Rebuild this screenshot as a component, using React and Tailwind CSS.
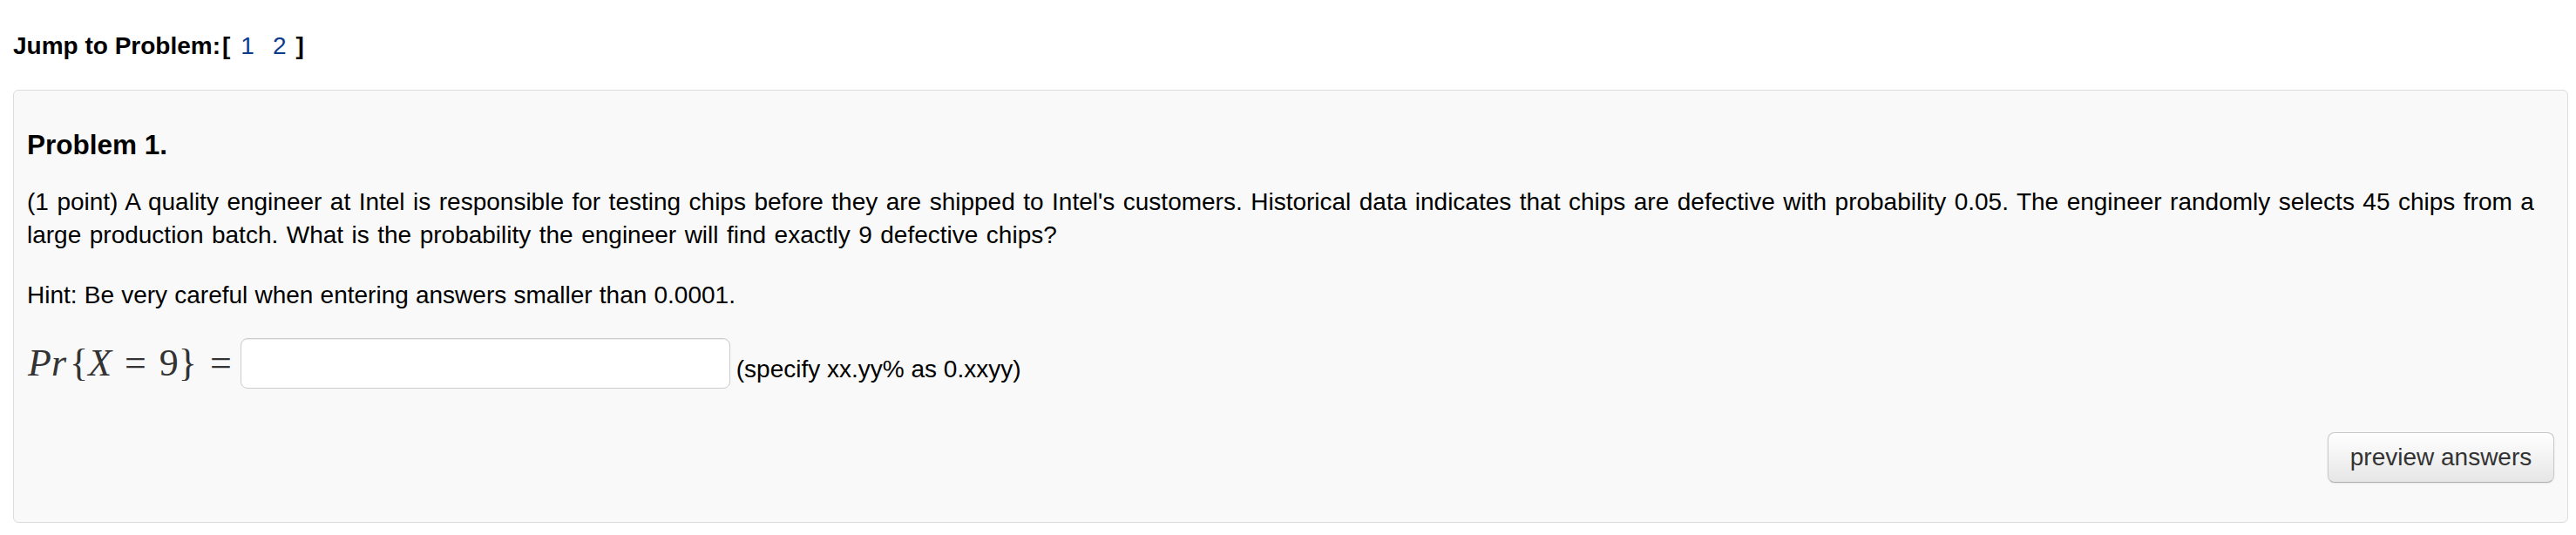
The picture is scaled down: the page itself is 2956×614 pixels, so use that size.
import React from "react";

const App = () => {
  return (
    <div className="min-h-screen bg-white pl-[15px] pr-[9px] font-['Liberation_Sans',Arial,sans-serif] text-black">
      {/* jump bar */}
      <div className="pt-[33px] text-[28px] font-bold leading-[40px] whitespace-nowrap">
        Jump to Problem:
        <span className="ml-[2px]">[</span>
        <a href="#p1" className="ml-[12px] font-normal text-[#0b3b8c]">1</a>
        <a href="#p2" className="ml-[21px] font-normal text-[#0b3b8c]">2</a>
        <span className="ml-[11px]">]</span>
      </div>

      <div className="mt-[30px] rounded-[6px] border border-[#dcdcdc] bg-[#f9f9f9] px-[15px] pt-[42px] pb-[45px]">
        <h3 className="text-[31.5px] font-bold leading-[40px]">Problem 1.</h3>
        <p className="mt-[27px] text-[28px] leading-[38px] [word-spacing:1.7px]">
          (1 point) A quality engineer at Intel is responsible for testing chips before they are shipped to Intel's customers. Historical data indicates that chips are defective with probability 0.05. The engineer randomly selects 45 chips from a large production batch. What is the probability the engineer will find exactly 9 defective chips?
        </p>
        <p className="mt-[31px] text-[28px] leading-[38px] [word-spacing:0.4px]">
          Hint: Be very careful when entering answers smaller than 0.0001.
        </p>

        <div className="mt-[30px] flex items-center">
          <span className="ml-[1px] font-['Liberation_Serif','Times_New_Roman',serif] text-[44px] leading-[58px] text-[#333] whitespace-nowrap">
            <i>Pr</i>
            <span className="ml-[4px]">{"{"}</span>
            <i>X</i>
            <span className="mx-[15px]">=</span>
            <span>9</span>
            <span>{"}"}</span>
            <span className="ml-[15px]">=</span>
          </span>
          <input
            type="text"
            className="ml-[10px] h-[58px] w-[562px] rounded-[8px] border border-[#cccccc] bg-white shadow-[inset_0_1px_1px_rgba(0,0,0,0.075)] outline-none"
          />
          <span className="ml-[7px] mt-[14px] text-[28px] leading-[38px] whitespace-nowrap">
            (specify xx.yy% as 0.xxyy)
          </span>
        </div>

        <div className="mt-[50px] flex justify-end">
          <button className="h-[58px] w-[260px] rounded-[8px] border border-[#c8c8c8] border-b-[#b0b0b0] bg-gradient-to-b from-white to-[#e6e6e6] text-[28px] text-[#333] shadow-[0_1px_2px_rgba(0,0,0,0.08)]">
            preview answers
          </button>
        </div>
      </div>
    </div>
  );
};

export default App;
